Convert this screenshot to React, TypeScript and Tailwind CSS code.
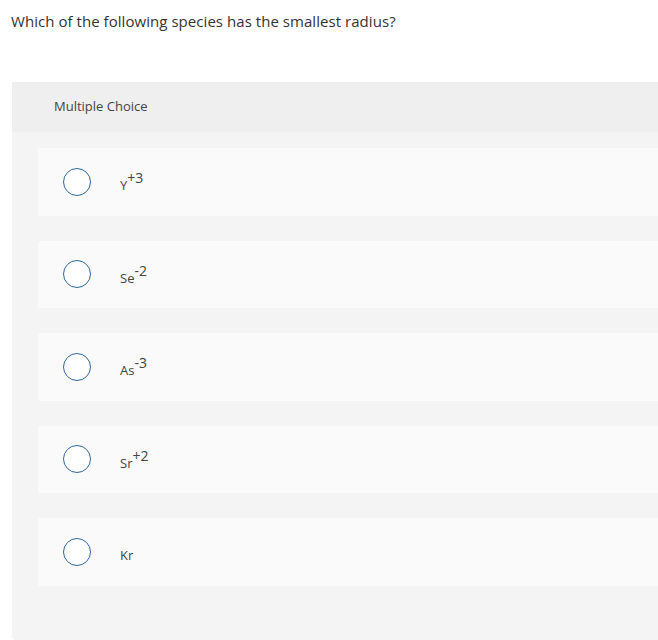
import React from 'react';

interface Choice {
  base: string;
  charge?: string;
}

const choices: Choice[] = [
  { base: 'Y', charge: '+3' },
  { base: 'Se', charge: '-2' },
  { base: 'As', charge: '-3' },
  { base: 'Sr', charge: '+2' },
  { base: 'Kr' },
];

function Radio() {
  return <span className="block h-[28px] w-[28px] shrink-0 rounded-full border-[1.5px] border-[#2f679e] bg-white" />;
}

export default function App() {
  return (
    <div className="min-h-[640px] bg-white font-['Open_Sans',sans-serif] text-[#333]">
      <p className="pl-[11px] pt-[10px] text-[15px] leading-[22px] tracking-[0.05px] text-[#333]">
        Which of the following species has the smallest radius?
      </p>

      <div className="mt-[50px] ml-[12px] rounded-bl-[4px] bg-[#f4f4f4] pb-[54px]">
        <div className="flex h-[50px] items-center bg-[#efefef] pl-[42px] text-[13px] text-[#444]">
          Multiple Choice
        </div>

        <div className="flex flex-col gap-[25px] pt-[16px] pl-[26px]">
          {choices.map((c, i) => (
            <div key={i} className="flex h-[67.5px] items-center rounded-l-[3px] bg-[#fafafa] pl-[25px]">
              <Radio />
              <span className="ml-[29px] pt-[8px] text-[13px] leading-none text-[#444]">
                {c.base}
                {c.charge && <sup className="top-[-7px] text-[14px]">{c.charge}</sup>}
              </span>
            </div>
          ))}
        </div>
      </div>
    </div>
  );
}
